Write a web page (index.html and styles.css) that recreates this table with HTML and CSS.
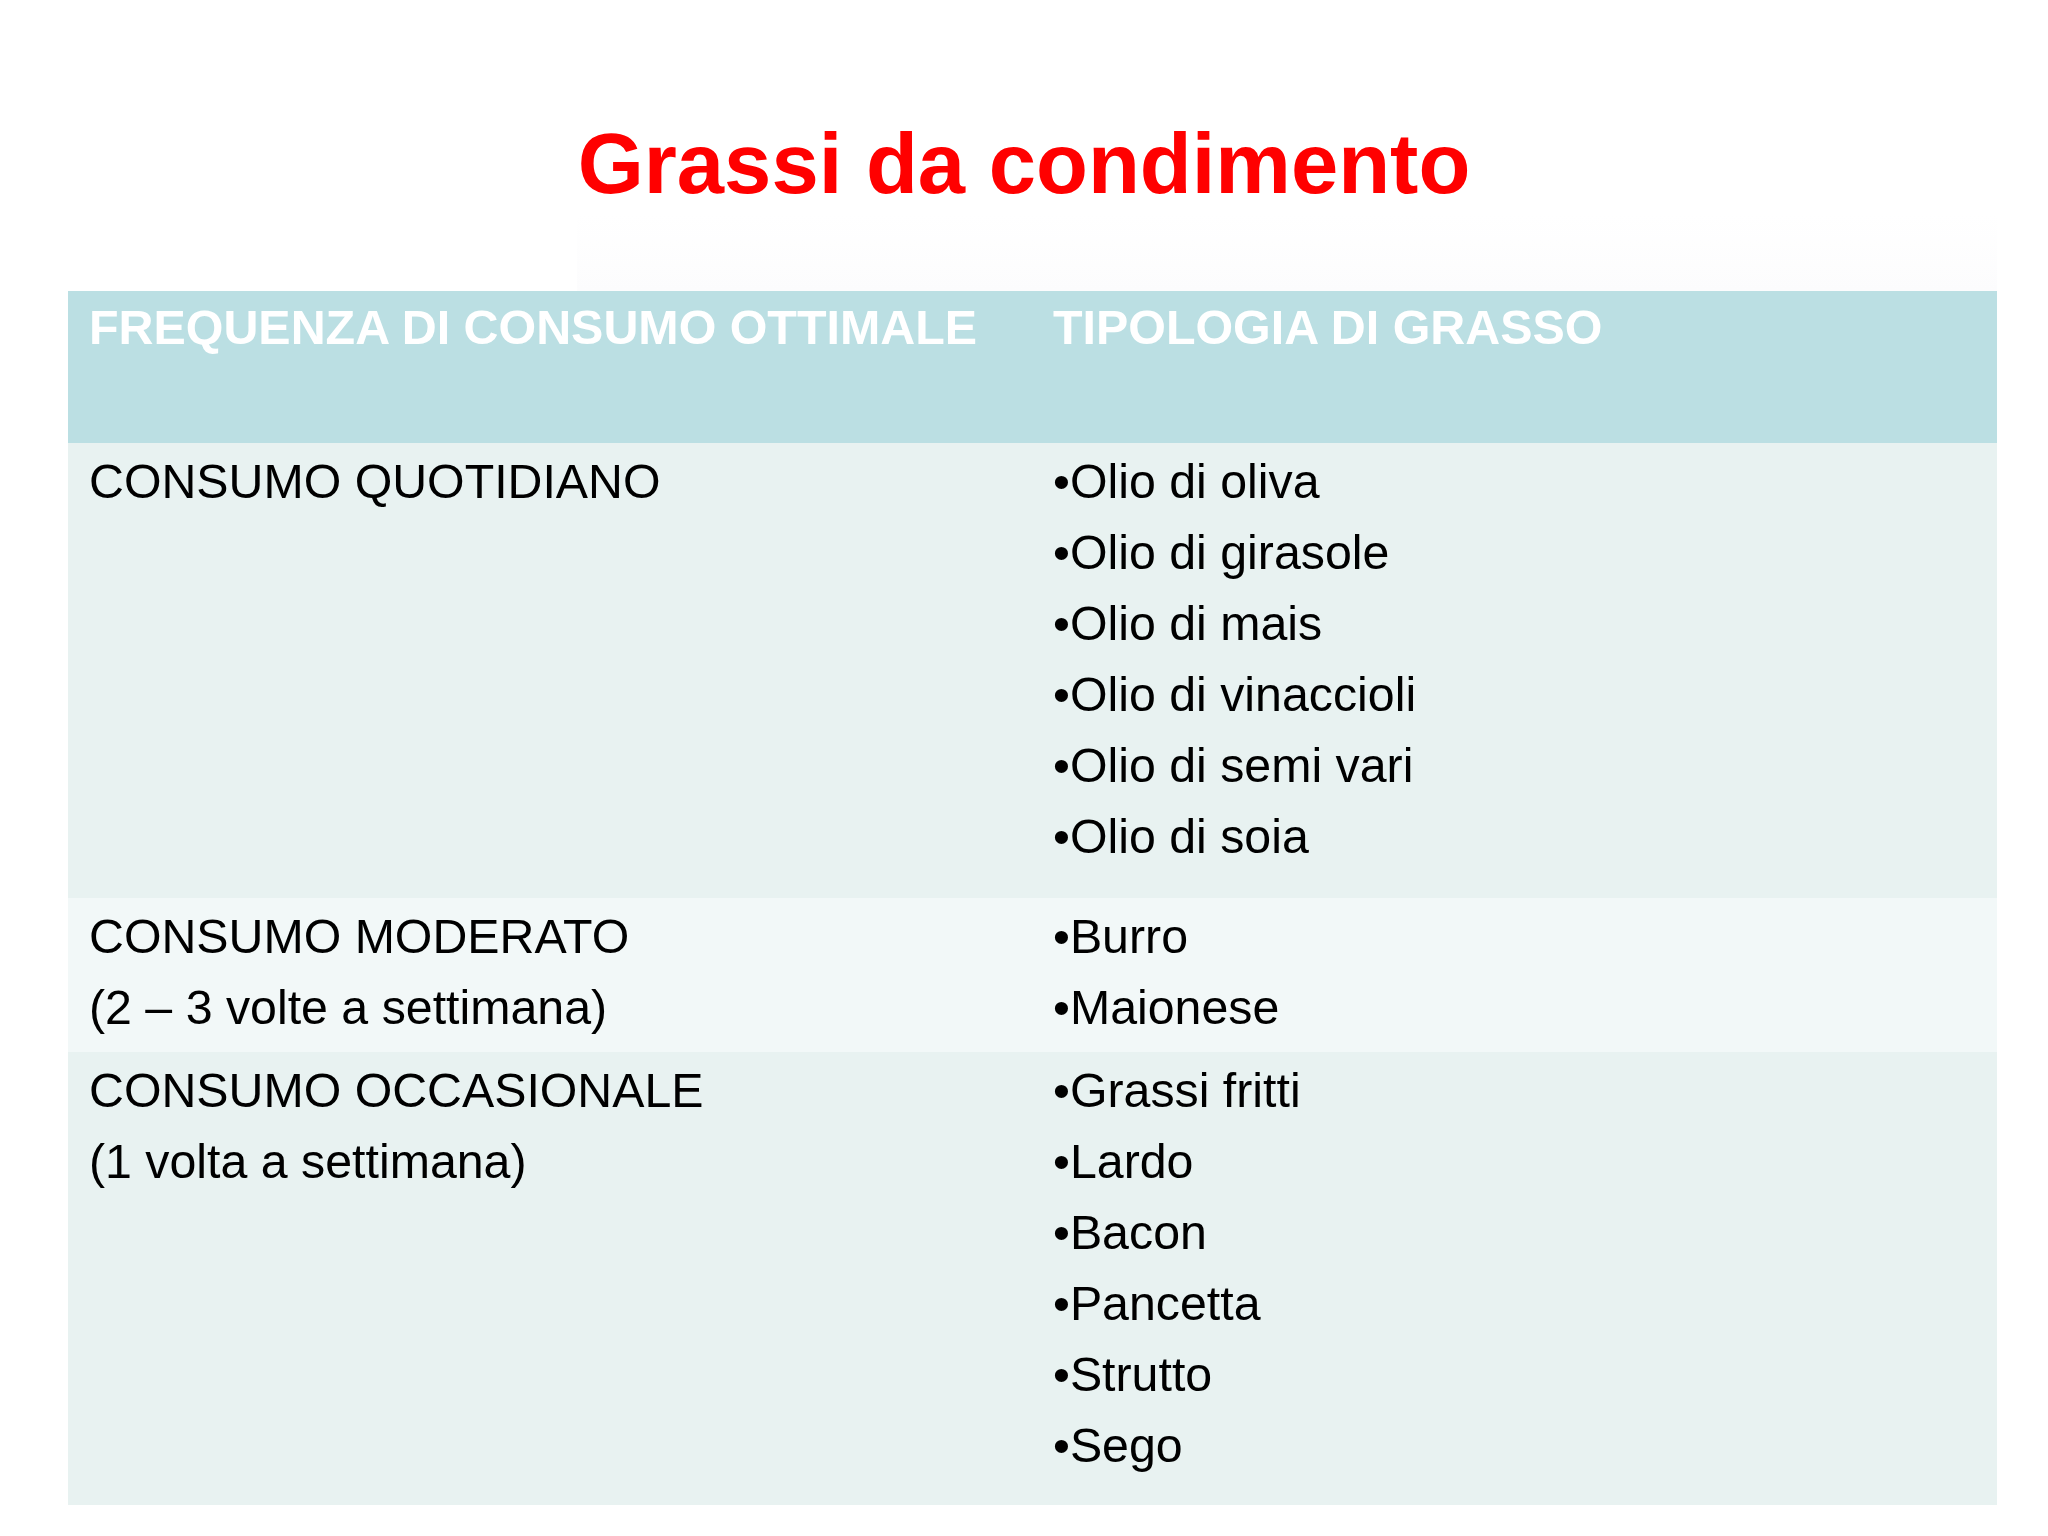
FILE: index.html
```html
<!DOCTYPE html>
<html lang="it">
<head>
<meta charset="utf-8">
<title>Grassi da condimento</title>
<link rel="stylesheet" href="styles.css">
</head>
<body>
<div class="slide">
  <h1 class="title">Grassi da condimento</h1>
  <div class="title-shade"></div>
  <div class="table">
    <div class="row head">
      <div class="cell">FREQUENZA DI CONSUMO OTTIMALE</div>
      <div class="cell">TIPOLOGIA DI GRASSO</div>
    </div>
    <div class="row r1">
      <div class="cell"><p>CONSUMO QUOTIDIANO</p></div>
      <div class="cell">
        <p>•Olio di oliva</p>
        <p>•Olio di girasole</p>
        <p>•Olio di mais</p>
        <p>•Olio di vinaccioli</p>
        <p>•Olio di semi vari</p>
        <p>•Olio di soia</p>
      </div>
    </div>
    <div class="row r2">
      <div class="cell">
        <p>CONSUMO MODERATO</p>
        <p>(2 – 3 volte a settimana)</p>
      </div>
      <div class="cell">
        <p>•Burro</p>
        <p>•Maionese</p>
      </div>
    </div>
    <div class="row r3">
      <div class="cell">
        <p>CONSUMO OCCASIONALE</p>
        <p>(1 volta a settimana)</p>
      </div>
      <div class="cell">
        <p>•Grassi fritti</p>
        <p>•Lardo</p>
        <p>•Bacon</p>
        <p>•Pancetta</p>
        <p>•Strutto</p>
        <p>•Sego</p>
      </div>
    </div>
  </div>
</div>
</body>
</html>
```

FILE: styles.css
```css
html, body {
  margin: 0;
  padding: 0;
  background: #ffffff;
}

body {
  font-family: "Liberation Sans", Arial, sans-serif;
  color: #000000;
}

.slide {
  width: 2048px;
  height: 1536px;
  overflow: hidden;
}

.title {
  margin: 0;
  padding-top: 114px;
  height: 100px;
  line-height: 100px;
  font-size: 85px;
  font-weight: bold;
  color: #ff0000;
  text-align: center;
}

.title-shade {
  height: 77px;
  margin-left: 577px;
  width: 1420px;
  background: linear-gradient(to bottom, #ffffff, #fcfcfd);
}

.table {
  margin-left: 68px;
  width: 1929px;
  display: flex;
  flex-direction: column;
}

.row {
  display: grid;
  grid-template-columns: 964px 965px;
}

.cell {
  padding: 3px 21px 0 21px;
  font-size: 48.3px;
  line-height: 71px;
}

.cell p {
  margin: 0;
}

.head {
  height: 152px;
  background: #bbdfe3;
}

.head .cell {
  color: #ffffff;
  font-weight: bold;
  font-size: 48.4px;
  padding-top: 1px;
}

.r1 {
  height: 455px;
  background: #e8f2f1;
}

.r2 {
  height: 154px;
  background: #f2f8f8;
}

.r3 {
  height: 453px;
  background: #e8f2f1;
}
```
